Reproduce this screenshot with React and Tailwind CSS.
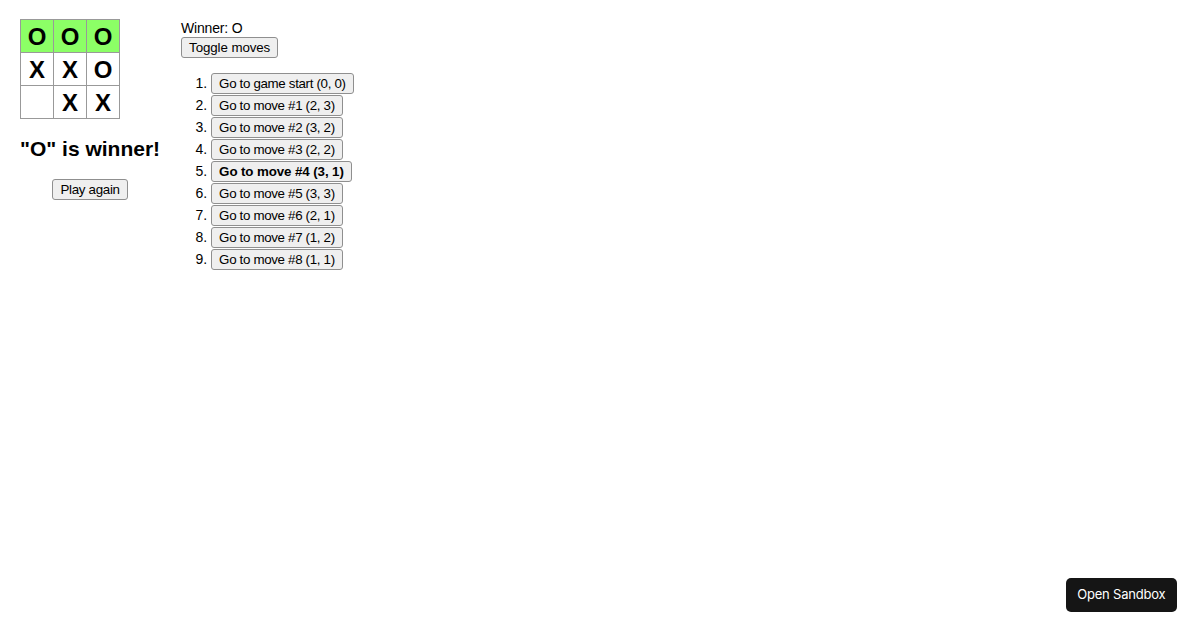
import { useState } from 'react'

const board = ['O', 'O', 'O', 'X', 'X', 'O', null, 'X', 'X']
const winLine = [0, 1, 2]

const moves = [
  'Go to game start (0, 0)',
  'Go to move #1 (2, 3)',
  'Go to move #2 (3, 2)',
  'Go to move #3 (2, 2)',
  'Go to move #4 (3, 1)',
  'Go to move #5 (3, 3)',
  'Go to move #6 (2, 1)',
  'Go to move #7 (1, 2)',
  'Go to move #8 (1, 1)',
]

const btn =
  'h-[21px] rounded-[3px] border border-[#8f8f8f] bg-[#efefef] px-[7px] text-[13.33px] leading-[15px] text-black'

function Square({ value, highlight }) {
  return (
    <button
      className={
        'float-left -mr-px -mt-px h-[34px] w-[34px] border border-[#999] p-0 text-center text-[24px] font-bold leading-[34px] text-black ' +
        (highlight ? 'bg-[#8cff66]' : 'bg-white')
      }
    >
      {value}
    </button>
  )
}

export default function App() {
  const [current] = useState(4)

  return (
    <div className="min-h-[630px] bg-white font-['Liberation_Sans',Arial,sans-serif] text-[14px] text-black">
      <div className="flex items-start p-5">
        <div className="flex flex-col">
          <div className="w-[100px]">
            {[0, 1, 2].map((r) => (
              <div key={r} className="after:clear-both after:table after:content-['']">
                {[0, 1, 2].map((c) => {
                  const i = r * 3 + c
                  return <Square key={i} value={board[i]} highlight={winLine.includes(i)} />
                })}
              </div>
            ))}
          </div>
          <h2 className="mt-[18px] text-[21px] font-bold leading-[24px]">"O" is winner!</h2>
          <div className="mt-[18px] flex justify-center">
            <button className={btn + ' tracking-[-0.3px]'}>Play again</button>
          </div>
        </div>

        <div className="ml-[21px]">
          <div className="leading-[16px] tracking-[-0.2px]">Winner: O</div>
          <button className={btn + ' mt-px tracking-[-0.1px]'}>Toggle moves</button>
          <ol className="mt-[15px] list-decimal pl-[30px]">
            {moves.map((m, i) => (
              <li key={i} className="h-[22px]">
                <button className={btn + (i === current ? ' font-bold tracking-[-0.1px]' : ' tracking-[-0.33px]')}>{m}</button>
              </li>
            ))}
          </ol>
        </div>
      </div>

      <button className="fixed bottom-[18px] right-[23px] h-[34px] rounded-[5px] bg-[#151515] px-[11.5px] font-['Inter',sans-serif] text-[13px] tracking-[-0.2px] text-white">
        Open Sandbox
      </button>
    </div>
  )
}
